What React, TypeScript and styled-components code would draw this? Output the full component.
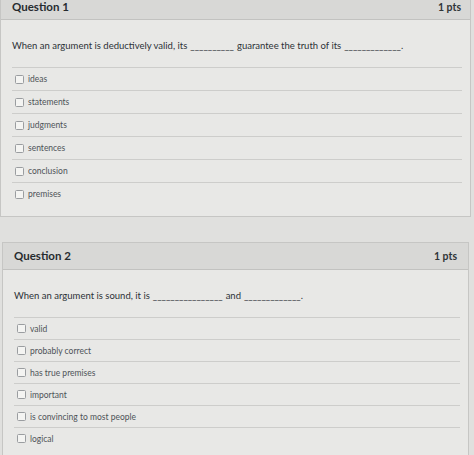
import styled, { createGlobalStyle } from 'styled-components';

const GlobalStyle = createGlobalStyle`
  html, body {
    margin: 0;
    padding: 0;
    background-color: #e0e0de;
    font-family: Lato, "Noto Sans", sans-serif;
  }
`;

type Question = {
  title: string;
  parts: string[];
  options: string[];
  inset: number;
  rowHeight: number;
  headerHeight: number;
};

const questions: Question[] = [
  {
    title: 'Question 1',
    parts: ['When an argument is deductively valid, its', '__________', 'guarantee the truth of its', '_____________.'],
    options: ['ideas', 'statements', 'judgments', 'sentences', 'conclusion', 'premises'],
    inset: 0,
    rowHeight: 23,
    headerHeight: 20,
  },
  {
    title: 'Question 2',
    parts: ['When an argument is sound, it is', '________________', 'and', '_____________.'],
    options: ['valid', 'probably correct', 'has true premises', 'important', 'is convincing to most people', 'logical'],
    inset: 2,
    rowHeight: 22,
    headerHeight: 27,
  },
];

const App = () => {
  return (
    <Page>
      <GlobalStyle />
      {questions.map((q) => (
        <Card key={q.title} $inset={q.inset}>
          <Header $height={q.headerHeight}>
            <Title>{q.title}</Title>
            <Points>1 pts</Points>
          </Header>
          <Body>
            <Prompt>
              {q.parts.map((p, i) => (
                <span key={i}>{p}</span>
              ))}
            </Prompt>
            <Options>
              {q.options.map((o) => (
                <Option key={o} $height={q.rowHeight}>
                  <Box />
                  <Label>{o}</Label>
                </Option>
              ))}
            </Options>
          </Body>
        </Card>
      ))}
    </Page>
  );
};

const Page = styled.div`
  width: 474px;
  height: 455px;
  overflow: hidden;
  display: flex;
  flex-direction: column;
  gap: 25px;
`;

const Card = styled.section<{ $inset: number }>`
  margin: 0 ${(p) => 3 + p.$inset}px 0 ${(p) => p.$inset}px;
  border: 1px solid #c6c6c4;
  border-top-width: ${(p) => (p.$inset ? 1 : 0)}px;
  background-color: #e8e8e6;
  flex-shrink: 0;
`;

const Header = styled.div<{ $height: number }>`
  height: ${(p) => p.$height}px;
  box-sizing: border-box;
  display: flex;
  justify-content: space-between;
  align-items: ${(p) => (p.$height > 24 ? 'center' : 'flex-start')};
  padding: 0 ${(p) => (p.$height > 24 ? 11 : 9)}px 0 11px;
  background-color: #d8d8d6;
  border-bottom: 1px solid #c2c2c0;
`;

const Title = styled.span`
  font-size: 11.5px;
  line-height: 14px;
  font-weight: 700;
  color: #262b2f;
`;

const Points = styled.span`
  font-size: 10.5px;
  line-height: 14px;
  font-weight: 700;
  color: #2f3438;
`;

const Body = styled.div`
  padding: 20px 8px 11px 11px;
`;

const Prompt = styled.div`
  display: flex;
  gap: 3px;
  font-size: 9.5px;
  line-height: 12px;
  color: #2c3136;
  margin-bottom: 15px;
`;

const Options = styled.div`
  display: flex;
  flex-direction: column;
`;

const Option = styled.div<{ $height: number }>`
  height: ${(p) => p.$height}px;
  box-sizing: border-box;
  display: flex;
  align-items: center;
  gap: 4px;
  padding-left: 3px;
  border-top: 1px solid #cdcdcb;
`;

const Box = styled.span`
  width: 7px;
  height: 7px;
  border: 1px solid #9a9da0;
  border-radius: 1.5px;
  background-color: #f4f4f2;
`;

const Label = styled.span`
  font-size: 8.5px;
  color: #4e5358;
`;

export default App;
